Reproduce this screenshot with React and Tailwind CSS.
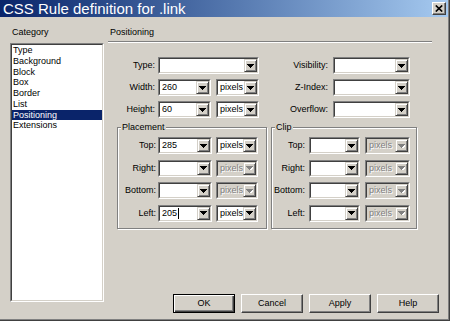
import React from "react";

function Arrow({ disabled }) {
  return (
    <div className="w-[13px] h-full shrink-0 bg-[#d4d0c8] border border-t-[#d4d0c8] border-l-[#d4d0c8] border-b-[#404040] border-r-[#404040] shadow-[inset_1px_1px_0_#fff,inset_-1px_-1px_0_#808080] flex items-center justify-center">
      <svg width="7" height="4" viewBox="0 0 7 4" shapeRendering="crispEdges">
        {disabled && <polygon points="1,1 8,1 4.5,5" fill="#ffffff" />}
        <polygon points="0,0 7,0 3.5,4" fill={disabled ? "#808080" : "#000000"} />
      </svg>
    </div>
  );
}

function Combo({ className, value, disabled, cursor }) {
  return (
    <div className={`h-[17px] shrink-0 border border-t-[#808080] border-l-[#808080] border-r-white border-b-white ${className}`}>
      <div
        className={`h-full flex items-center border border-t-[#404040] border-l-[#404040] border-r-[#d4d0c8] border-b-[#d4d0c8] ${
          disabled ? "bg-[#d4d0c8]" : "bg-white"
        }`}
      >
        <div
          className={`flex-1 flex items-center pl-[2px] leading-[11px] ${
            disabled ? "text-[#808080] [text-shadow:1px_1px_0_#ffffff]" : "text-black"
          }`}
        >
          <span>{value}</span>
          {cursor && <span className="w-[1px] h-[11px] bg-black ml-[1px]" />}
        </div>
        <Arrow disabled={disabled} />
      </div>
    </div>
  );
}

function Row({ label, labelW, gap, children }) {
  return (
    <div className="flex items-center h-[17px]">
      <div className={`${labelW} text-right leading-[11px] shrink-0 whitespace-nowrap`}>{label}</div>
      <div className={`${gap} flex items-center`}>{children}</div>
    </div>
  );
}

function Group({ title, className, children }) {
  return (
    <div
      className={`relative h-[102px] border border-[#808080] shadow-[1px_1px_0_#ffffff,inset_1px_1px_0_#ffffff] ${className}`}
    >
      <span className="absolute left-[3px] -top-[6px] px-[1px] bg-[#d4d0c8] leading-[11px]">{title}</span>
      <div className="pt-[9px] flex flex-col gap-[5.5px]">{children}</div>
    </div>
  );
}

function Btn({ children, def }) {
  return (
    <div
      className={`w-[62px] h-[19px] flex items-center justify-center leading-[11px] bg-[#d4d0c8] ${
        def
          ? "border border-black shadow-[inset_1px_1px_0_#ffffff,inset_-1px_-1px_0_#404040,inset_-2px_-2px_0_#808080]"
          : "border border-t-white border-l-white border-b-[#404040] border-r-[#404040] shadow-[inset_-1px_-1px_0_#808080]"
      }`}
    >
      {children}
    </div>
  );
}

const items = ["Type", "Background", "Block", "Box", "Border", "List", "Positioning", "Extensions"];

export default function App() {
  return (
    <div className="w-[450px] h-[321px] bg-[#d4d0c8] border-r border-b border-r-[#404040] border-b-[#404040] font-['Liberation_Sans',Arial,sans-serif] text-[9px] text-black overflow-hidden">
      <div className="h-full border-r border-b border-r-[#808080] border-b-[#808080] flex flex-col">
        {/* Title bar */}
        <div className="h-[17px] shrink-0 flex items-center bg-linear-to-r from-[#0a246a] to-[#a6caf0] pl-[3px] pr-[2px]">
          <span className="flex-1 text-white text-[15px] leading-[17px] whitespace-nowrap">
            CSS Rule definition for .link
          </span>
          <div className="w-[14px] h-[13px] bg-[#d4d0c8] border border-t-white border-l-white border-b-[#404040] border-r-[#404040] shadow-[inset_-1px_-1px_0_#808080] flex items-center justify-center">
            <svg width="8" height="7" viewBox="0 0 8 7">
              <path d="M0.8 0.5 L7.2 6.5 M7.2 0.5 L0.8 6.5" stroke="#000" strokeWidth="1.7" />
            </svg>
          </div>
        </div>

        {/* Body */}
        <div className="flex flex-1">
          {/* Category */}
          <div className="w-[108px] shrink-0 pl-[10px] pt-[10px]">
            <div className="pl-[2px] leading-[11px]">Category</div>
            <div className="mt-[5px] w-[94px] h-[259px] border border-t-[#808080] border-l-[#808080] border-r-white border-b-white">
              <div className="h-full bg-white border border-t-[#404040] border-l-[#404040] border-r-[#d4d0c8] border-b-[#d4d0c8]">
                {items.map((it) => (
                  <div
                    key={it}
                    className={`h-[10.75px] leading-[10.75px] pl-[1px] whitespace-nowrap ${
                      it === "Positioning" ? "bg-[#0a246a] text-white" : ""
                    }`}
                  >
                    {it}
                  </div>
                ))}
              </div>
            </div>
          </div>

          {/* Panel */}
          <div className="flex-1 flex flex-col pt-[10px] pr-[9px] pb-[6px]">
            <div className="pl-[2px] leading-[11px]">Positioning</div>
            <div className="mt-[3px] mr-[7px] border-t border-b border-t-[#808080] border-b-white" />

            <div className="mt-[14px] flex">
              {/* Left column */}
              <div className="w-[159px] flex flex-col">
                <div className="flex flex-col gap-[5px]">
                  <Row label="Type:" labelW="w-[47px]" gap="ml-[3px]">
                    <Combo className="w-[101px]" value="" />
                  </Row>
                  <Row label="Width:" labelW="w-[47px]" gap="ml-[3px]">
                    <Combo className="w-[53px]" value="260" />
                    <Combo className="w-[43px] ml-[5px]" value="pixels" />
                  </Row>
                  <Row label="Height:" labelW="w-[47px]" gap="ml-[3px]">
                    <Combo className="w-[53px]" value="60" />
                    <Combo className="w-[43px] ml-[5px]" value="pixels" />
                  </Row>
                </div>
                <Group title="Placement" className="mt-[9px] ml-[9px] w-[150px]">
                  <Row label="Top:" labelW="w-[38px]" gap="ml-[2px]">
                    <Combo className="w-[54px]" value="285" />
                    <Combo className="w-[42px] ml-[4px]" value="pixels" />
                  </Row>
                  <Row label="Right:" labelW="w-[38px]" gap="ml-[2px]">
                    <Combo className="w-[54px]" value="" />
                    <Combo className="w-[42px] ml-[4px]" value="pixels" disabled />
                  </Row>
                  <Row label="Bottom:" labelW="w-[38px]" gap="ml-[2px]">
                    <Combo className="w-[54px]" value="" />
                    <Combo className="w-[42px] ml-[4px]" value="pixels" disabled />
                  </Row>
                  <Row label="Left:" labelW="w-[38px]" gap="ml-[2px]">
                    <Combo className="w-[54px]" value="205" cursor />
                    <Combo className="w-[42px] ml-[4px]" value="pixels" />
                  </Row>
                </Group>
              </div>

              {/* Right column */}
              <div className="ml-[4px] w-[146px] flex flex-col">
                <div className="flex flex-col gap-[5px]">
                  <Row label="Visibility:" labelW="w-[57px]" gap="ml-[5px]">
                    <Combo className="w-[77px]" value="" />
                  </Row>
                  <Row label="Z-Index:" labelW="w-[57px]" gap="ml-[5px]">
                    <Combo className="w-[77px]" value="" />
                  </Row>
                  <Row label="Overflow:" labelW="w-[57px]" gap="ml-[5px]">
                    <Combo className="w-[77px]" value="" />
                  </Row>
                </div>
                <Group title="Clip" className="mt-[9px] w-[146px]">
                  {["Top:", "Right:", "Bottom:", "Left:"].map((l) => (
                    <Row key={l} label={l} labelW="w-[33px]" gap="ml-[4px]">
                      <Combo className="w-[51px]" value="" />
                      <Combo className="w-[45px] ml-[5px]" value="pixels" disabled />
                    </Row>
                  ))}
                </Group>
              </div>
            </div>

            <div className="mt-auto flex justify-end gap-[6px]">
              <Btn def>OK</Btn>
              <Btn>Cancel</Btn>
              <Btn>Apply</Btn>
              <Btn>Help</Btn>
            </div>
          </div>
        </div>
      </div>
    </div>
  );
}
